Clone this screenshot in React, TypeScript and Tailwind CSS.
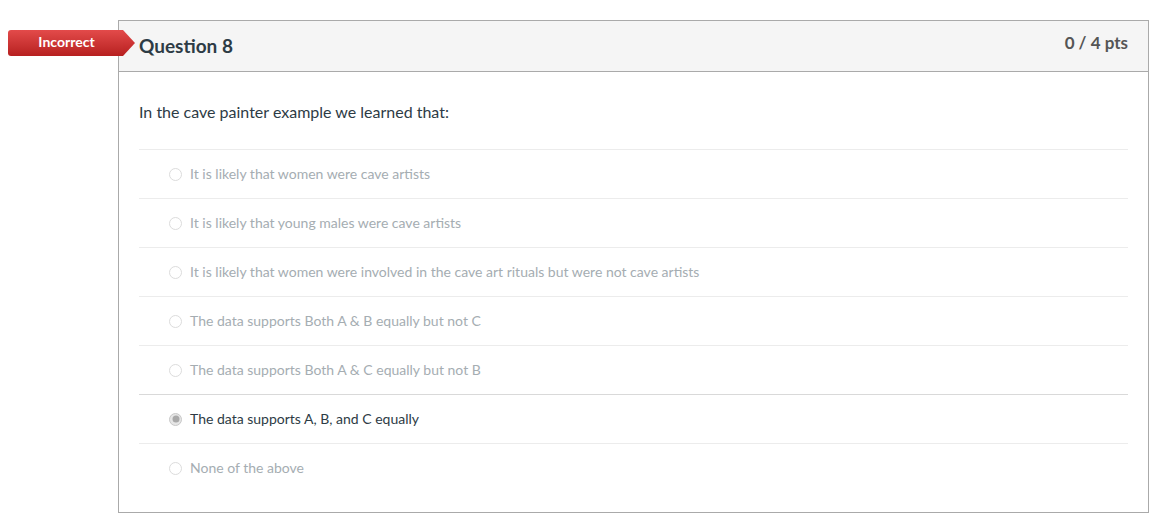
import React from "react";

const answers = [
  { text: "It is likely that women were cave artists", selected: false },
  { text: "It is likely that young males were cave artists", selected: false },
  { text: "It is likely that women were involved in the cave art rituals but were not cave artists", selected: false },
  { text: "The data supports Both A & B equally but not C", selected: false },
  { text: "The data supports Both A & C equally but not B", selected: false },
  { text: "The data supports A, B, and C equally", selected: true },
  { text: "None of the above", selected: false },
];

function Radio({ checked }: { checked: boolean }) {
  return (
    <span
      className={
        "relative inline-block h-[13px] w-[13px] shrink-0 rounded-full border " +
        (checked ? "border-[#c8c8c8] bg-[#e6e6e6]" : "border-[#dcdcdc] bg-white")
      }
    >
      {checked && (
        <span className="absolute left-1/2 top-1/2 h-[7px] w-[7px] -translate-x-1/2 -translate-y-1/2 rounded-full bg-[#a9a9a9]" />
      )}
    </span>
  );
}

export default function App() {
  return (
    <div
      className="relative min-h-[524px] w-[1175px] bg-white"
      style={{ fontFamily: "Lato, 'Open Sans', sans-serif" }}
    >
      <div className="pl-[118px] pt-[20px]">
        <div className="relative w-[1031px] border border-[#aaaaaa]">
          {/* Incorrect badge */}
          <div className="absolute left-[-111px] top-[9px] flex h-[26px] items-center">
            <div className="flex h-[26px] w-[115px] items-center justify-center rounded-l-[3px] bg-gradient-to-b from-[#e34a4a] to-[#b71f1f] pb-[4px] pl-[2px] text-[14px] font-bold text-white">
              Incorrect
            </div>
            <svg width="12" height="26" viewBox="0 0 12 26" className="block">
              <defs>
                <linearGradient id="g" x1="0" y1="0" x2="0" y2="1">
                  <stop offset="0" stopColor="#e34a4a" />
                  <stop offset="1" stopColor="#b71f1f" />
                </linearGradient>
              </defs>
              <polygon points="0,0 12,13 0,26" fill="url(#g)" />
            </svg>
          </div>
          {/* header */}
          <div className="flex h-[51px] items-start justify-between border-b border-[#aaaaaa] bg-[#f5f5f5] px-[20px]">
            <h2 className="pt-[13px] text-[19px] font-bold leading-[24px] text-[#2d3b45]">
              Question 8
            </h2>
            <div className="pt-[11px] text-[17px] font-bold leading-[22px] text-[#555555]">
              0 / 4 pts
            </div>
          </div>
          {/* body */}
          <div className="px-[20px] pb-[20px] pt-[30px]">
            <p className="text-[16px] leading-[20px] text-[#2d3b45]">
              In the cave painter example we learned that:
            </p>
            <div className="mt-[27px]">
              {answers.map((a, i) => (
                <div
                  key={i}
                  className={
                    "flex h-[49px] items-center gap-[8px] border-t pl-[30px] " +
                    (a.selected ? "border-[#d9d9d9]" : "border-[#ececec]")
                  }
                >
                  <Radio checked={a.selected} />
                  <span
                    className={
                      "text-[14px] leading-[18px] " +
                      (a.selected ? "text-[#2d3b45]" : "text-[#a5adb2]")
                    }
                  >
                    {a.text}
                  </span>
                </div>
              ))}
            </div>
          </div>
        </div>
      </div>
    </div>
  );
}
